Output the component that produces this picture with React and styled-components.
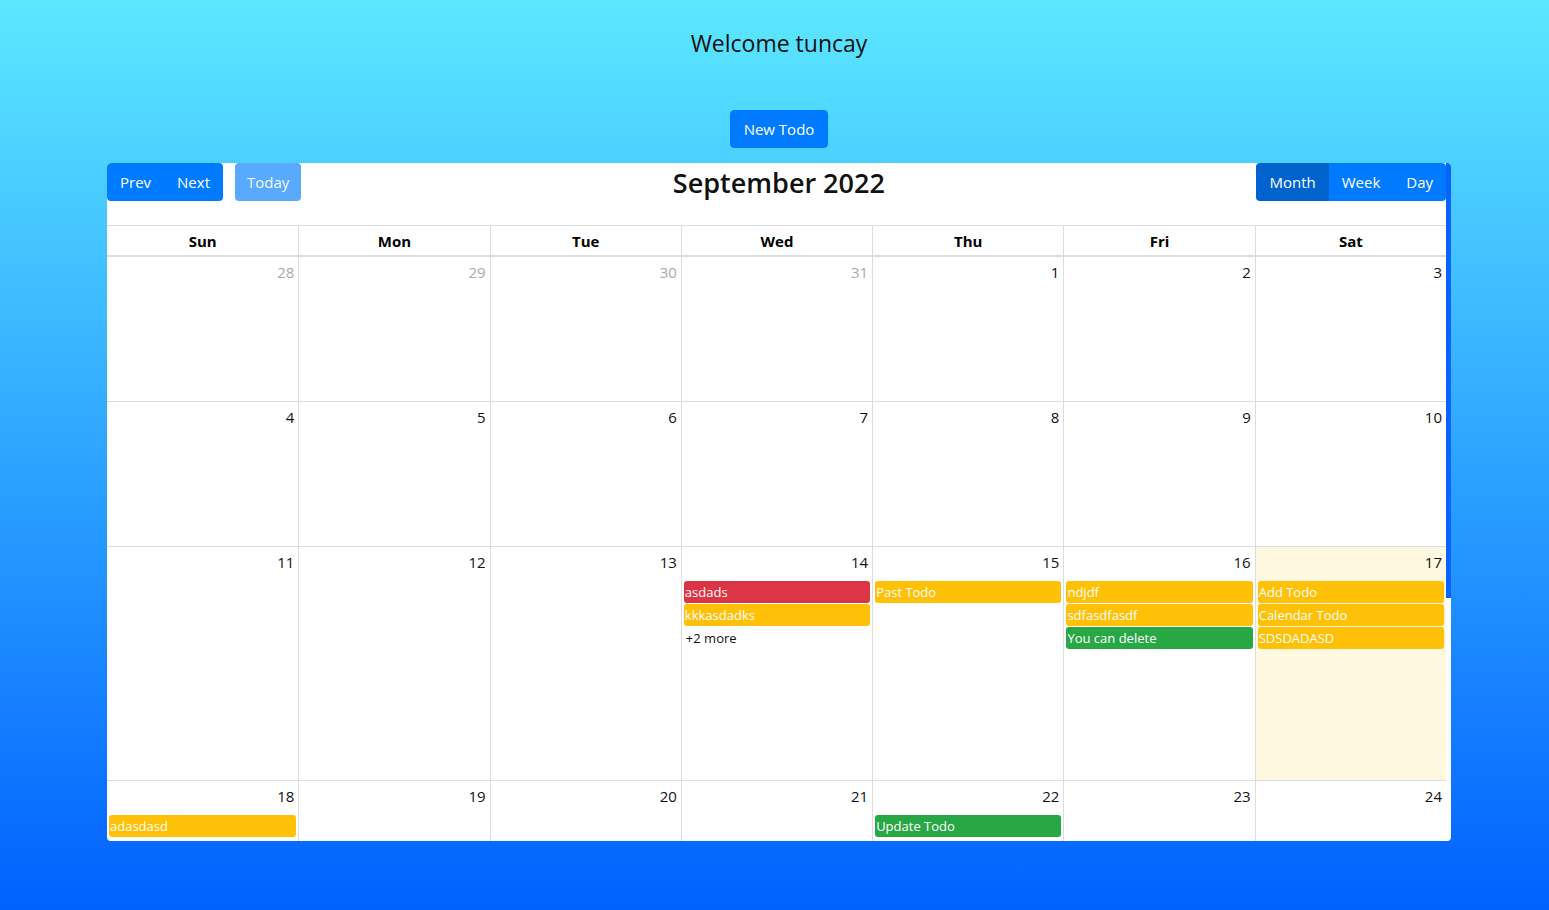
import React from "react";
import styled, { createGlobalStyle } from "styled-components";

const GlobalStyle = createGlobalStyle`
  * { box-sizing: border-box; }
  html, body { margin: 0; padding: 0; }
  body {
    font-family: "Open Sans", "Noto Sans", sans-serif;
    color: #212529;
    background: #0061ff;
  }
`;

const weeks = [
  { height: 145, days: [28, 29, 30, 31, 1, 2, 3], off: [0, 1, 2, 3] },
  { height: 145, days: [4, 5, 6, 7, 8, 9, 10], off: [] },
  { height: 234, days: [11, 12, 13, 14, 15, 16, 17], off: [] },
  { height: 234, days: [18, 19, 20, 21, 22, 23, 24], off: [] },
];

const events = {
  "14": [
    { title: "asdads", tone: "red" },
    { title: "kkkasdadks", tone: "yellow" },
  ],
  "15": [{ title: "Past Todo", tone: "yellow" }],
  "16": [
    { title: "ndjdf", tone: "yellow" },
    { title: "sdfasdfasdf", tone: "yellow" },
    { title: "You can delete", tone: "green" },
  ],
  "17": [
    { title: "Add Todo", tone: "yellow" },
    { title: "Calendar Todo", tone: "yellow" },
    { title: "SDSDADASD", tone: "yellow" },
  ],
  "18": [{ title: "adasdasd", tone: "yellow" }],
  "22": [{ title: "Update Todo", tone: "green" }],
};

const more = { "14": 2 };

const toneColors = {
  red: "#dc3545",
  yellow: "#ffc107",
  green: "#28a745",
};

const dayNames = ["Sun", "Mon", "Tue", "Wed", "Thu", "Fri", "Sat"];

const App = () => {
  return (
    <Page>
      <GlobalStyle />
      <Welcome>Welcome tuncay</Welcome>
      <NewButton>New Todo</NewButton>
      <CalendarBox>
        <Month>
          <Toolbar>
            <BtnGroup>
              <Btn>Prev</Btn>
              <Btn>Next</Btn>
            </BtnGroup>
            <TodayBtn>Today</TodayBtn>
            <Title>September 2022</Title>
            <BtnGroup>
              <Btn $active>Month</Btn>
              <Btn>Week</Btn>
              <Btn>Day</Btn>
            </BtnGroup>
          </Toolbar>
          <HeaderRow>
            {dayNames.map((d) => (
              <HeaderCell key={d}>{d}</HeaderCell>
            ))}
          </HeaderRow>
          {weeks.map((w, wi) => (
            <WeekRow key={wi} $h={w.height}>
              {w.days.map((d, di) => {
                const off = w.off.includes(di);
                const key = off ? "" : String(d);
                const list = events[key] || [];
                return (
                  <DayCell key={di} $today={!off && d === 17 && wi === 2}>
                    <DateNum $off={off}>{d}</DateNum>
                    {list.map((e) => (
                      <Event key={e.title} $tone={e.tone}>
                        {e.title}
                      </Event>
                    ))}
                    {more[key] && <More>+{more[key]} more</More>}
                  </DayCell>
                );
              })}
            </WeekRow>
          ))}
        </Month>
        <ScrollThumb />
      </CalendarBox>
    </Page>
  );
};

const Page = styled.div`
  min-height: 100vh;
  background: linear-gradient(to bottom, #5ce8ff 0%, #0061ff 100%);
  display: flex;
  flex-direction: column;
  align-items: center;
  padding: 28px 0 0 9px;
`;

const Welcome = styled.h3`
  margin: 0;
  font-size: 23px;
  font-weight: 400;
  line-height: 30px;
  color: #111;
`;

const NewButton = styled.button`
  margin-top: 52px;
  height: 38px;
  padding: 0 13px;
  border: 1px solid #007bff;
  background: #007bff;
  color: #fff;
  font-family: inherit;
  font-size: 15px;
  border-radius: 4px;
`;

const CalendarBox = styled.div`
  position: relative;
  margin-top: 15px;
  width: 1344px;
  height: 678px;
  background: #fff;
  border-radius: 4px;
  overflow: hidden;
`;

const Month = styled.div`
  width: 1339px;
`;

const ScrollThumb = styled.div`
  position: absolute;
  top: 0;
  right: 0;
  width: 5px;
  height: 435px;
  background: #0a63ff;
  border-radius: 0 3px 0 0;
`;

const Toolbar = styled.div`
  display: flex;
  align-items: center;
  margin-bottom: 24px;
`;

const BtnGroup = styled.div`
  display: flex;
  & > button:first-child {
    border-radius: 4px 0 0 4px;
  }
  & > button:last-child {
    border-radius: 0 4px 4px 0;
  }
`;

const Btn = styled.button`
  height: 38px;
  padding: 0 13px;
  border: none;
  border-radius: 0;
  background: ${(p) => (p.$active ? "#0062cc" : "#007bff")};
  color: #fff;
  font-family: inherit;
  font-size: 15px;
`;

const TodayBtn = styled(Btn)`
  margin-left: 12px;
  padding: 0 12px;
  border-radius: 4px;
  background: #59a9ff;
  color: #f2f8ff;
`;

const Title = styled.div`
  flex: 1;
  text-align: center;
  font-size: 27px;
  font-weight: 600;
  color: #111;
`;

const HeaderRow = styled.div`
  display: grid;
  grid-template-columns: repeat(7, 1fr);
  border-top: 1px solid #ddd;
  border-bottom: 1px solid #ddd;
`;

const HeaderCell = styled.div`
  height: 29px;
  display: flex;
  align-items: center;
  justify-content: center;
  font-size: 15px;
  font-weight: 700;
  color: #000;
  & + & {
    border-left: 1px solid #ddd;
  }
`;

const WeekRow = styled.div`
  display: grid;
  grid-template-columns: repeat(7, 1fr);
  height: ${(p) => p.$h}px;
  border-top: 1px solid #ddd;
`;

const DayCell = styled.div`
  display: flex;
  flex-direction: column;
  padding: 0 2px;
  background: ${(p) => (p.$today ? "#fef8e1" : "transparent")};
  & + & {
    border-left: 1px solid #ddd;
  }
`;

const DateNum = styled.div`
  text-align: right;
  padding: 4px 2px 0 0;
  height: 34px;
  font-size: 15px;
  line-height: 22px;
  color: ${(p) => (p.$off ? "#aaa" : "#111")};
`;

const Event = styled.div`
  height: 22px;
  margin-bottom: 1px;
  padding-left: 1px;
  border-radius: 3px;
  background: ${(p) => toneColors[p.$tone]};
  color: #fff;
  font-size: 13px;
  line-height: 22px;
  white-space: nowrap;
  overflow: hidden;
`;

const More = styled.div`
  padding-left: 2px;
  font-size: 13px;
  line-height: 22px;
  color: #111;
`;

export default App;
